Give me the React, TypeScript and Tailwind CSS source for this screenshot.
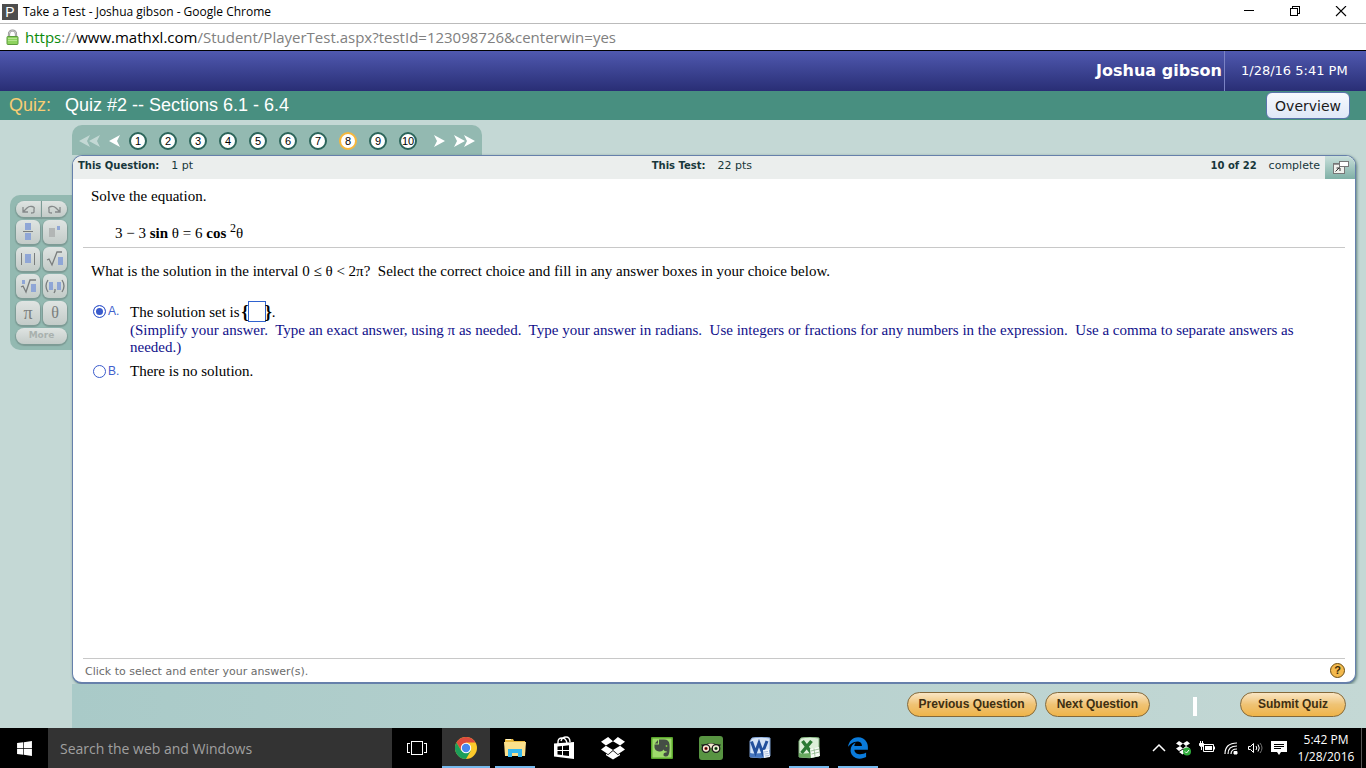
import { useState, type ReactNode } from "react";
import { FaEdgeLegacy, FaWindows } from "react-icons/fa";

const questions = [1, 2, 3, 4, 5, 6, 7, 8, 9, 10];

export default function App() {
  return (
    <div className="flex min-h-screen flex-col bg-[#c4d8d5] text-black">
      <WindowChrome />
      <SiteHeader />
      <main className="flex flex-1">
        <div className="w-[72px] shrink-0 pt-[75px] pl-[10px]">
          <MathPalette />
        </div>
        <div className="flex min-w-0 flex-1 flex-col pt-[5px]">
          <Pager />
          <QuestionPanel />
          <BottomBar />
        </div>
      </main>
      <Taskbar />
    </div>
  );
}

function WindowChrome() {
  return (
    <div className="bg-white font-['Open_Sans',sans-serif]">
      <div className="flex h-6 items-center border-b border-[#bbbbbb] pr-[2px] pl-[2px]">
        <span className="flex h-4 w-4 items-center justify-center bg-[#4d4d4d] font-['Liberation_Sans',sans-serif] text-sm text-white">P</span>
        <span className="ml-[5px] flex-1 text-xs">Take a Test - Joshua gibson - Google Chrome</span>
        <button aria-label="Minimize" className="flex w-[46px] justify-center">
          <svg width="12" height="12" shapeRendering="crispEdges"><path d="M1 4.500h10" stroke="#000" /></svg>
        </button>
        <button aria-label="Restore" className="flex w-[46px] justify-center">
          <svg width="12" height="12" fill="none" stroke="#000" shapeRendering="crispEdges"><path d="M1.500 2.500h7v7h-7zM3.500 2V.5h7v7H9" /></svg>
        </button>
        <button aria-label="Close" className="flex w-[46px] justify-center">
          <svg width="12" height="12" stroke="#000" strokeWidth="1.100"><path d="M1 0l10 10M11 0L1 10" /></svg>
        </button>
      </div>
      <div className="flex h-[27px] items-center border-b border-black pl-[6px]">
        <svg width="13" height="17" viewBox="0 0 13 17" fill="none">
          <path d="M3 8V5a3.500 3.500 0 0 1 7 0v3" stroke="#8c8c8c" strokeWidth="2.200" />
          <path d="M3 8V5a3.500 3.500 0 0 1 7 0v3" stroke="#d8d8d8" strokeWidth=".8" />
          <rect x="1" y="7.500" width="11" height="8" rx=".8" fill="#8ed35f" stroke="#5a9a3c" />
          <path d="M2 9.500h9M2 11.500h9" stroke="#b4e58f" />
        </svg>
        <div className="ml-[6px] text-[15px] leading-5 whitespace-nowrap text-[#808080]">
          <span className="text-[#0b8a0b]">https</span>://<span className="text-black">www.mathxl.com</span>
          /Student/PlayerTest.aspx?testId=123098726&amp;centerwin=yes
        </div>
      </div>
    </div>
  );
}

function SiteHeader() {
  return (
    <header>
      <div className="flex h-10 justify-end bg-linear-to-b from-[#5059b0] to-[#292e75] font-['DejaVu_Sans',sans-serif] text-white">
        <div className="flex items-center border-r border-[#7b82c4] pr-[2px] text-base font-bold">Joshua gibson</div>
        <div className="flex w-[141px] items-center pl-4 text-[13px]">1/28/16 5:41 PM</div>
      </div>
      <div className="flex h-[29px] items-start bg-[#488f80] pt-px pr-4 pl-[9px] font-['Liberation_Sans',sans-serif] text-lg leading-[26px]">
        <span className="text-[#f8cd74]">Quiz:</span>
        <h1 className="ml-[14px] flex-1 text-white">Quiz #2 -- Sections 6.1 - 6.4</h1>
        <button className="h-[27px] rounded-md border border-[#5a74ac] bg-linear-to-b from-[#f7f9fd] to-[#dfe8f7] px-2 font-['DejaVu_Sans',sans-serif] text-sm text-[#1a1a1a]">
          Overview
        </button>
      </div>
    </header>
  );
}

function Arrow({ flip = false, faded = false, double = false, label }: { flip?: boolean; faded?: boolean; double?: boolean; label: string }) {
  const w = double ? 21 : 11;
  return (
    <button aria-label={label} className={faded ? "opacity-45" : ""}>
      <svg width={w} height="14" viewBox={`0 0 ${w} 14`} fill="#fff">
        <g transform={flip ? `translate(${w} 0) scale(-1 1)` : undefined}>
          <path d="M0 1l11 6-11 6 3-6z" />
          {double && <path d="M10 1l11 6-11 6 3-6z" />}
        </g>
      </svg>
    </button>
  );
}

function Pager() {
  const [current, setCurrent] = useState(8);
  return (
    <nav className="flex h-[30px] items-center gap-[9px] self-start rounded-t-[10px] bg-[#93b9b1] px-[7px] pt-[2px] font-['Liberation_Sans',sans-serif]">
      <Arrow label="First question" flip double faded />
      <Arrow label="Previous" flip />
      <div className="mr-2 flex gap-3">
        {questions.map((n) => (
          <button
            key={n}
            onClick={() => setCurrent(n)}
            className={`flex h-[18px] w-[18px] items-center justify-center rounded-full border-2 bg-white text-[11px] leading-none ${
              n === current ? "border-[#f6b73c]" : "border-[#2b645a]"
            }`}
          >
            {n}
          </button>
        ))}
      </div>
      <Arrow label="Next" />
      <Arrow label="Last question" double />
    </nav>
  );
}

function Key({ label, children, className = "h-6 rounded-md" }: { label: string; children: ReactNode; className?: string }) {
  return (
    <button
      aria-label={label}
      className={`flex items-center justify-center bg-linear-to-b from-[#dfe4e2] to-[#c3cbc8] text-[#7b7f7d] shadow-[0_1px_1px_1px_#7d9b95] ${className}`}
    >
      {children}
    </button>
  );
}

function KeyIcon({ children }: { children: ReactNode }) {
  return (
    <svg width="22" height="20" viewBox="0 0 22 20" fill="none" stroke="#797d7d">
      {children}
    </svg>
  );
}

const blue = { fill: "#8fa6d6", stroke: "none" };

function MathPalette() {
  return (
    <div className="flex flex-col gap-[3px] rounded-l-[10px] bg-[#93b9b1] py-[6px] pr-[5px] pl-[6px] font-['Liberation_Serif',serif]">
      <div className="grid grid-cols-2 gap-px">
        <Key label="Undo" className="h-4 rounded-l-lg">
          <svg width="13" height="9" viewBox="0 0 13 9" fill="none" stroke="#85898a" strokeWidth="1.300"><path d="M1 2v5h5M1.500 6.500L5 3Q7 1 10 1.500T12 4v3q0 1-3 1" /></svg>
        </Key>
        <Key label="Redo" className="h-4 rounded-r-lg">
          <svg width="13" height="9" viewBox="0 0 13 9" fill="none" stroke="#85898a" strokeWidth="1.300"><path d="M12 2v5H7M11.500 6.500L8 3Q6 1 3 1.500T1 4v3q0 1 3 1" /></svg>
        </Key>
      </div>
      <div className="grid grid-cols-2 gap-[3px]">
        <Key label="Fraction">
          <KeyIcon><path d="M6 9.500h10" /><rect x="8" y="1" width="6" height="7" {...blue} /><rect x="8" y="11" width="6" height="7" {...blue} /></KeyIcon>
        </Key>
        <Key label="Exponent">
          <KeyIcon><rect x="5" y="6" width="6" height="9" fill="#b2b6b5" stroke="none" /><rect x="13" y="4" width="3" height="4" {...blue} /></KeyIcon>
        </Key>
        <Key label="Absolute value">
          <KeyIcon><path d="M4.500 4v12M17.500 4v12" /><rect x="8" y="5" width="6" height="9" {...blue} /></KeyIcon>
        </Key>
        <Key label="Square root">
          <KeyIcon><path d="M3 11l2-1 3 6 5-13h5" strokeWidth="1.300" /><rect x="14" y="8" width="5" height="8" {...blue} /></KeyIcon>
        </Key>
        <Key label="Nth root">
          <KeyIcon><path d="M4 11l2-1 3 6 4-12h6" strokeWidth="1.300" /><rect x="5" y="4" width="3" height="4" {...blue} /><rect x="14" y="8" width="5" height="8" {...blue} /></KeyIcon>
        </Key>
        <Key label="Ordered pair">
          <KeyIcon><path d="M4 4q-4 6 0 12M18 4q4 6 0 12M11 13v2l-1 2" strokeWidth="1.300" /><rect x="5" y="6" width="4" height="8" {...blue} /><rect x="13" y="6" width="4" height="8" {...blue} /></KeyIcon>
        </Key>
        <Key label="Pi"><span className="text-lg leading-none">π</span></Key>
        <Key label="Theta"><span className="text-base leading-none">θ</span></Key>
      </div>
      <Key label="More" className="h-4 rounded-lg">
        <span className="font-['DejaVu_Sans',sans-serif] text-[9px] font-bold text-[#a9b1ae]">More</span>
      </Key>
    </div>
  );
}

function QuestionPanel() {
  const [choice, setChoice] = useState("A");
  return (
    <section className="mr-[10px] flex flex-1 flex-col overflow-hidden rounded-[10px] border border-b-2 border-[#6680ab] bg-white shadow-[1px_1px_3px_#5f7f7d]">
      <div className="flex h-[23px] items-stretch bg-[#ebeeed] font-['DejaVu_Sans',sans-serif] text-[11px] text-[#17373b]">
        <div className="flex flex-1 items-center justify-between px-[5px] pb-[2px]">
          <p><b className="text-[10px]">This Question:</b><span className="ml-3">1 pt</span></p>
          <p><b className="text-[10px]">This Test:</b><span className="ml-3">22 pts</span></p>
          <p><b className="text-[10px]">10 of 22</b><span className="ml-3">complete</span></p>
        </div>
        <button aria-label="Open in window" className="flex w-[30px] items-center justify-center bg-linear-to-b from-[#c9dfdb] to-[#7fb0a6]">
          <svg width="17" height="15" viewBox="0 0 17 15" fill="none">
            <g shapeRendering="crispEdges">
              <path d="M1.500 3.500h11v10h-11z" fill="#f2f2ee" stroke="#777" />
              <path d="M2 4.500h10" stroke="#999" />
              <path d="M7.500 1.500h9v5h-9z" fill="#fff" stroke="#777" />
            </g>
            <path d="M3.500 11.500l4-4M4.500 8H8v3" stroke="#333" />
          </svg>
        </button>
      </div>

      <div className="mx-[10px] flex flex-1 flex-col font-['Liberation_Serif',serif] text-[15px] leading-5">
        <div className="border-b border-[#c8c8c8] px-2 pt-[7px] pb-1">
          <p>Solve the equation.</p>
          <p className="mt-[17px] pl-6">
            3 − 3 <b>sin</b> θ = 6 <b>cos</b> <sup className="text-xs leading-none">2</sup>θ
          </p>
        </div>

        <div className="px-2 pt-[13px]">
          <p>
            What is the solution in the interval 0 ≤ θ &lt; 2π?&nbsp; Select the correct choice and fill in any answer boxes in your choice below.
          </p>
          <div className="mt-5 flex">
            <Choice id="A" checked={choice === "A"} onPick={setChoice} />
            <div>
              <div className="flex h-[21px] items-center">
                <label htmlFor="answer">The solution set is</label>
                <span className="ml-[2px] text-lg leading-5 font-bold">{"{"}</span>
                <input id="answer" className="-mx-px h-[21px] w-[18px] border border-[#2f62cf] bg-white outline-none" />
                <span className="text-lg leading-5 font-bold">{"}"}</span>.
              </div>
              <p className="leading-[17px] text-[#10108a]">
                (Simplify your answer.&nbsp; Type an exact answer, using π as needed.&nbsp; Type your answer in radians.&nbsp; Use integers or fractions for any numbers in the expression.&nbsp; Use a comma to separate answers as needed.)
              </p>
            </div>
          </div>
          <div className="mt-[5px] flex">
            <Choice id="B" checked={choice === "B"} onPick={setChoice} />
            <p>There is no solution.</p>
          </div>
        </div>
      </div>

      <div className="mx-[10px] flex h-6 items-center justify-between border-t border-[#c8c8c8] pl-[2px] font-['DejaVu_Sans',sans-serif] text-[11px] text-[#6b6b6b]">
        <span className="pt-1">Click to select and enter your answer(s).</span>
        <button aria-label="Help" className="flex h-[15px] w-[15px] items-center justify-center rounded-full border border-[#6b4c10] bg-[#f3b94d] font-['Liberation_Sans',sans-serif] text-[11px] leading-none font-bold text-[#3a2a08]">
          ?
        </button>
      </div>
    </section>
  );
}

function Choice({ id, checked, onPick }: { id: string; checked: boolean; onPick: (v: string) => void }) {
  return (
    <label className="flex h-5 w-[39px] shrink-0 items-center pl-[2px] font-['Liberation_Sans',sans-serif] text-xs text-[#4060cc]">
      <input
        type="radio"
        name="choice"
        value={id}
        checked={checked}
        onChange={() => onPick(id)}
        className="mr-[2px] h-[13px] w-[13px] shrink-0 appearance-none rounded-full border border-[#3a5bcc] bg-white checked:bg-[#3a5bcc] checked:shadow-[inset_0_0_0_2px_#fff]"
      />
      {id}.
    </label>
  );
}

function PillButton({ children, className = "px-[11px]" }: { children: ReactNode; className?: string }) {
  return (
    <button className={`h-[25px] rounded-full border border-[#84693a] bg-linear-to-b from-[#fae6c4] via-[#efc374] to-[#efb448] pb-[2px] text-xs font-bold text-[#3e2f12] ${className}`}>
      {children}
    </button>
  );
}

function BottomBar() {
  return (
    <div className="flex h-11 items-start justify-end bg-linear-to-r from-[#a9cac8] to-[#c4d8d5] pt-2 pr-5 font-['Liberation_Sans',sans-serif]">
      <div className="flex gap-2">
        <PillButton>Previous Question</PillButton>
        <PillButton>Next Question</PillButton>
      </div>
      <div className="mx-[43px] mt-[5px] h-[19px] w-1 bg-white" />
      <PillButton className="px-[17px]">Submit Quiz</PillButton>
    </div>
  );
}

function AppButton({ label, open = false, active = false, children }: { label: string; open?: boolean; active?: boolean; children: ReactNode }) {
  return (
    <button aria-label={label} className={`flex h-10 w-12 flex-col items-center ${active ? "bg-[#333333]" : ""}`}>
      <span className="flex flex-1 items-center pt-[2px]">{children}</span>
      <span className={`h-[2px] ${active ? "w-12" : "w-10"} ${open ? "bg-[#76b9ed]" : ""}`} />
    </button>
  );
}

function Taskbar() {
  return (
    <footer className="flex h-10 items-center bg-black font-['Open_Sans',sans-serif] text-white">
      <button aria-label="Start" className="flex w-12 justify-center"><FaWindows size={17} /></button>
      <input
        aria-label="Search"
        placeholder="Search the web and Windows"
        className="h-10 w-[344px] bg-[#333333] px-3 text-sm text-white outline-none placeholder:text-[#a0a0a0]"
      />
      <button aria-label="Task view" className="flex w-[50px] justify-center">
        <svg width="20" height="14" viewBox="0 0 20 14" fill="none" stroke="#fff" shapeRendering="crispEdges"><path d="M4.500.5h11v13h-11zM3 2.500H.5v9H3M17 2.500h2.500v9H17" /></svg>
      </button>
      <div className="flex flex-1 gap-px">
        <AppButton label="Chrome" open active>
          <svg width="22" height="22" viewBox="0 0 22 22">
            <circle cx="11" cy="11" r="11" fill="#fbc92b" />
            <path d="M1.470 5.500A11 11 0 0 1 20.530 5.500H11L6.240 13.750z" fill="#dd4b3e" />
            <path d="M1.470 5.500A11 11 0 0 0 11 22L15.760 13.750H6.240z" fill="#1c9e5a" />
            <circle cx="11" cy="11" r="5.200" fill="#fff" />
            <circle cx="11" cy="11" r="4.200" fill="#4787ee" />
          </svg>
        </AppButton>
        <AppButton label="File Explorer" open>
          <svg width="22" height="20" viewBox="0 0 22 20">
            <path d="M1 1h8l1 2h11v15H1z" fill="#e9b93f" />
            <path d="M0 4h22l-1 14H1z" fill="#fbe08b" />
            <path d="M2 1.500h5" stroke="#fff6cf" />
            <path d="M4 19v-8h14v8h-4v-4H8v4z" fill="#35b8ee" />
          </svg>
        </AppButton>
        <AppButton label="Store">
          <svg width="22" height="24" viewBox="0 0 22 24" fill="none">
            <path d="M5 8V6q0-4 4-4t5 5M8 5q1-4 5-4t4 5" stroke="#fff" strokeWidth="1.400" />
            <path d="M1 7.500L21 6v17L1 20.500z" fill="#fff" />
            <path d="M4.500 10.500l4.500-.5v4H4.500zM10 10l6-.7V14h-6zM4.500 15H9v4l-4.500-.5zM10 15h6v5l-6-.8z" fill="#000" />
          </svg>
        </AppButton>
        <AppButton label="Dropbox">
          <svg width="24" height="23" viewBox="0 0 24 23" fill="#fff">
            <path d="M7.100 0L0 4.700l4.900 3.900L12 4.300zM16.900 0L24 4.700l-4.900 3.900L12 4.300zM0 12.500l7.100 4.700 4.900-4.100-7.100-4.400zM24 12.500l-7.100 4.700-4.900-4.100 7.100-4.400z" />
            <path d="M12 14l-4.900 4.100L5 16.700v1.600l7 4.200 7-4.200v-1.600l-2.100 1.400z" />
          </svg>
        </AppButton>
        <AppButton label="Evernote">
          <svg width="22" height="22" viewBox="0 0 22 22">
            <rect width="22" height="22" rx="1" fill="#5aa62c" />
            <rect x="1.500" y="1.500" width="19" height="19" fill="#9fdb6c" />
            <path d="M8 2.500h5q5 0 5.500 5 .5 7-1 10.500-1 2-3.500 1.500-2-.5-1.500-2.500t3-1.500l.5-1q-3 0-3.500-2-1 2.500-4.500 2-4-.5-4.500-4V7.500h4.500z" fill="#454e45" />
            <path d="M7 3v3.500H3.800z" fill="#454e45" />
            <circle cx="15.500" cy="9" r=".9" fill="#82cc43" />
          </svg>
        </AppButton>
        <AppButton label="TripAdvisor">
          <svg width="24" height="24" viewBox="0 0 24 24">
            <rect width="24" height="24" rx="3" fill="#589442" />
            <path d="M2 8.500h4q6-3 12 0h4l-2 3H4z" fill="#1b1b1b" />
            <path d="M8 8.500q4-2 8 0l-4 4z" fill="#f1e6cc" />
            <g fill="#f5edda" stroke="#1b1b1b" strokeWidth="1.300"><circle cx="7" cy="12.500" r="3.800" /><circle cx="17" cy="12.500" r="3.800" /></g>
            <circle cx="7" cy="12.500" r="1.700" fill="#c9342c" /><circle cx="17" cy="12.500" r="1.700" fill="#3b8a3b" />
            <circle cx="7" cy="12.500" r="1" fill="#111" /><circle cx="17" cy="12.500" r="1" fill="#111" />
          </svg>
        </AppButton>
        <AppButton label="Word">
          <svg width="22" height="22" viewBox="0 0 22 22">
            <path d="M3 1q9-2 18 0v18q-9 3-20 1V4z" fill="#d5e3f6" stroke="#7d9fd2" />
            <path d="M1 16q10 2 20-3v6q-9 3-20 1z" fill="#4776bd" />
            <path d="M2.500 4.500l4 11L10 6l3.500 9.500L18 4" fill="none" stroke="#22509d" strokeWidth="3" />
            <path d="M14 13l6-1 1 8-6 1z" fill="#f4f7fc" /><path d="M15 15l4-.5M15.500 17l4-.5M16 19l4-.5" stroke="#8aa4cb" strokeWidth=".7" />
          </svg>
        </AppButton>
        <AppButton label="Excel" open>
          <svg width="22" height="22" viewBox="0 0 22 22">
            <path d="M3 1q9-2 18 0v18q-9 3-20 1V4z" fill="#dcefd9" stroke="#82b27d" />
            <path d="M1 16q10 2 20-3v6q-9 3-20 1z" fill="#69aa60" />
            <path d="M4.500 4l9 12M13.500 4l-10 12" fill="none" stroke="#2b7a34" strokeWidth="3.500" />
            <path d="M12 12l9-2 1 9-9 2z" fill="#f6fbf5" /><path d="M13 14l8-2M13.500 17l8-2M16 11.500l1 8" stroke="#8bb689" strokeWidth=".8" />
          </svg>
        </AppButton>
        <AppButton label="Edge" open><FaEdgeLegacy size={22} color="#0a7bdb" /></AppButton>
      </div>
      <div className="flex">
        <Tray label="Show hidden icons"><path d="M3 12l6-6 6 6" strokeWidth="1.500" /></Tray>
        <Tray label="Dropbox status">
          <path d="M5 2l4 2.500L6 7 2 4.500zM13 2L9 4.500 12 7l4-2.500zM2 9.500L5 12l4-2.500L6 7zM16 9.500L13 12 9 9.500 12 7zM5 13l4-2.500 3 2.500-3.500 2.500z" fill="#fff" stroke="none" />
          <circle cx="13" cy="12.500" r="4" fill="#2fab3b" stroke="none" />
          <path d="M11 12.500l1.500 1.500 2.500-3" />
        </Tray>
        <Tray label="Battery">
          <path d="M5.500 5.500h10v7h-10zM16.500 7.500v3" />
          <path d="M7 7h7v4H7z" fill="#fff" stroke="none" />
          <path d="M1.500 4.500h4v2l-2 1.500-2-1.500zM2.500 2v2M4.500 2v2M3.500 8v3" fill="#fff" stroke="#fff" />
        </Tray>
        <Tray label="Wi-Fi">
          <path d="M3 15Q3 4 15 4M6 15Q6 7 15 7M9 15Q9 10 15 10" strokeWidth="1.200" />
          <path d="M12 15v-2.500h3V15z" fill="#fff" />
        </Tray>
        <Tray label="Volume">
          <path d="M2.500 7.500h2l3-3v9l-3-3h-2z" />
          <path d="M10 7q1.500 2 0 4M12 5.500q2.500 3.500 0 7" />
          <path d="M14 4q4 5 0 10" stroke="#777" />
        </Tray>
        <Tray label="Notifications">
          <path d="M1 2h16v11h-6l-2 3-2-3H1z" fill="#fff" stroke="none" />
          <path d="M4 5.500h10M4 7.500h10M4 9.500h7" stroke="#000" />
        </Tray>
      </div>
      <div className="w-[70px] text-center text-xs leading-[17px]">
        <p>5:42 PM</p>
        <p>1/28/2016</p>
      </div>
      <div className="h-10 w-[5px] border-l border-[#555555]" />
    </footer>
  );
}

function Tray({ label, children }: { label: string; children: ReactNode }) {
  return (
    <button aria-label={label} className="flex w-6 justify-center">
      <svg width="18" height="18" viewBox="0 0 18 18" fill="none" stroke="#fff">{children}</svg>
    </button>
  );
}
